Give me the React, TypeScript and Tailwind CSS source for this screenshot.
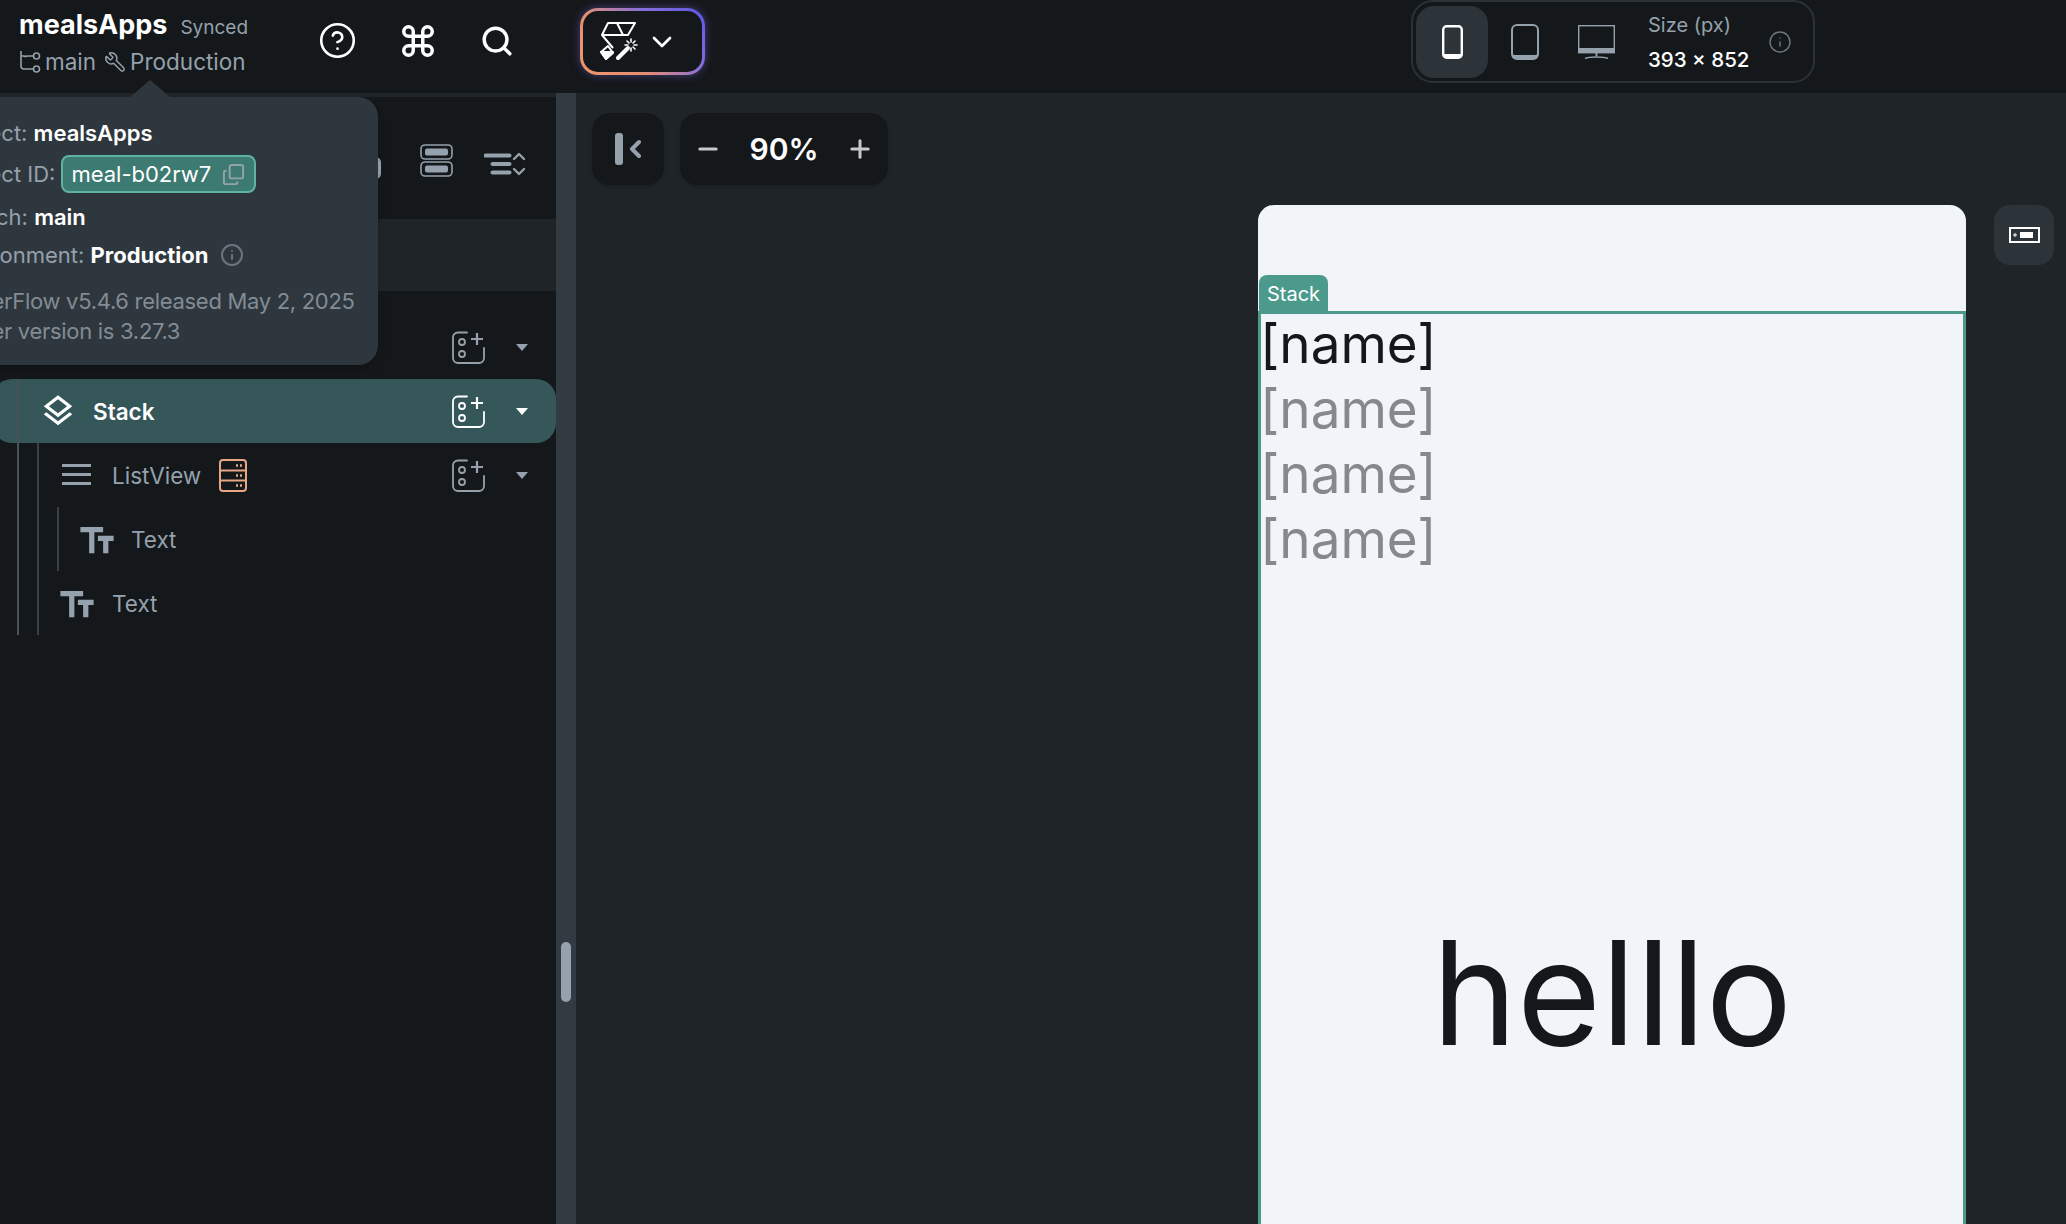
import { ChevronDown, CircleHelp, Command, Copy, Info, Minus, Plus, Search, Wrench } from 'lucide-react'
import { MdOutlineLayers, MdTextFields } from 'react-icons/md'

function BranchIcon() {
  return (
    <svg width="22" height="24" viewBox="0 0 22 24" fill="none" stroke="currentColor" strokeWidth="1.6">
      <path d="M2 1v15a3 3 0 0 0 3 3h9M2 6h3a3 3 0 0 0 3 0h6" />
      <circle cx="17.5" cy="6" r="3" />
      <circle cx="17.5" cy="19" r="3" />
    </svg>
  )
}

function MagicIcon() {
  return (
    <svg width="40" height="40" viewBox="0 0 40 40" fill="none" stroke="white" strokeWidth="2" strokeLinejoin="round">
      <path d="M2 13 8 1h27l-7 12ZM17 1l6 12M2 13l11 13" />
      <path d="M8 24 1 30l5 7 7-6Z" />
      <path d="M1 30h12l-7 7Z" fill="white" />
      <path d="m18 36 10-10" strokeWidth="4" strokeLinecap="round" />
      <path d="M31 17v3M31 26v3M25 23h3M34 23h3M27 19l2 2M33 25l2 2M35 19l-2 2" strokeWidth="1.6" strokeLinecap="round" />
    </svg>
  )
}

function AddWidgetIcon({ className }: { className: string }) {
  return (
    <svg className={className} width="33" height="33" viewBox="0 0 33 33" fill="none" stroke="currentColor" strokeWidth="1.8">
      <path d="M15 1.5H6a5 5 0 0 0-5 5V27a5 5 0 0 0 5 5h21a5 5 0 0 0 5-5V17" strokeLinecap="round" />
      <circle cx="10" cy="11" r="3" />
      <circle cx="10" cy="23" r="3" />
      <path d="M25 2v12M19 8h12" strokeWidth="2.2" />
    </svg>
  )
}

function StorageIcon() {
  return (
    <svg width="28" height="33" viewBox="0 0 28 33" fill="none" stroke="#e8a684" strokeWidth="2">
      <rect x="1" y="1" width="26" height="31" rx="3" />
      <path d="M1 11.5h26M1 21.5h26" />
      <path d="M17 6.5h2M21 6.5h2M17 16.5h2M21 16.5h2M17 26.5h2M21 26.5h2" strokeWidth="2.4" />
    </svg>
  )
}

function Caret({ className }: { className: string }) {
  return <div className={`w-0 h-0 border-x-[6px] border-x-transparent border-t-[7px] ${className}`} />
}

function TreeRow({
  icon,
  label,
  left,
  textLeft,
  actions,
  active,
  children,
}: {
  icon: React.ReactNode
  label: string
  left: string
  textLeft: string
  actions?: boolean
  active?: boolean
  children?: React.ReactNode
}) {
  return (
    <div className={`h-16 flex items-center pr-[28px] ${left} ${active ? '-ml-[8px] rounded-[20px] bg-[#35575a]' : ''}`}>
      <div className="shrink-0 flex items-center justify-center">{icon}</div>
      <span className={`${textLeft} mt-[2px] text-[22.5px] ${active ? 'font-semibold text-white' : 'text-[#95a1ac]'}`}>{label}</span>
      {children}
      {actions && (
        <div className="ml-auto flex items-center gap-[31px]">
          <AddWidgetIcon className={active ? 'text-white' : 'text-[#95a1ac]'} />
          <Caret className={active ? 'border-t-white' : 'border-t-[#95a1ac]'} />
        </div>
      )}
    </div>
  )
}

function Popover() {
  return (
    <>
      <div className="absolute left-[130px] top-[80px] w-0 h-0 border-x-[20px] border-x-transparent border-b-[17px] border-b-[#2f373e]" />
      <div className="absolute left-[-76px] top-[97px] w-[454px] h-[268px] rounded-[20px] bg-[#2f373e] pl-[24px] pt-[20px] text-[22px] leading-[32px] text-[#95a1ac] shadow-lg">
        <div>
          Project: <span className="font-semibold text-white">mealsApps</span>
        </div>
        <div className="flex items-center gap-[6px] mt-[6px]">
          Project ID:
          <span className="h-[38px] w-[195px] flex items-center justify-between pl-[8px] pr-[9px] rounded-[8px] bg-[#3d7a72] border-2 border-[#5fb3a3] text-white">
            meal-b02rw7
            <Copy size={23} className="text-[#95a1ac] -scale-y-100" />
          </span>
        </div>
        <div className="mt-[8px]">
          Branch: <span className="font-semibold text-white">main</span>
        </div>
        <div className="flex items-center gap-[12px] mt-[6px]">
          <span>
            Environment: <span className="font-bold text-white">Production</span>
          </span>
          <Info size={24} className="text-[#6b757d]" />
        </div>
        <div className="mt-[15px] text-[#828c94] leading-[30px] tracking-[-0.3px]">
          <div>FlutterFlow v5.4.6 released May 2, 2025</div>
          <div>Flutter version is 3.27.3</div>
        </div>
      </div>
    </>
  )
}

function Header() {
  return (
    <header className="h-[93px] shrink-0 bg-[#14181b] flex items-start">
      <div className="w-[270px] shrink-0 pl-[19px] pt-[7px]">
        <div className="flex items-baseline gap-[13px]">
          <span className="text-[27px] leading-[36px] font-bold text-white">mealsApps</span>
          <span className="text-[19px] leading-[26px] text-[#95a1ac]">Synced</span>
        </div>
        <div className="flex items-center text-[22.5px] leading-[32px] text-[#95a1ac] mt-[3px]">
          <BranchIcon />
          <span className="ml-[4px]">main</span>
          <Wrench size={22} strokeWidth={1.6} className="ml-[8px] -scale-x-100" />
          <span className="ml-[4px]">Production</span>
        </div>
      </div>
      <div className="flex items-center text-white mt-[21px] ml-[48px] gap-[42px]">
        <CircleHelp size={39} strokeWidth={1.6} />
        <Command size={38} strokeWidth={2.2} />
        <Search size={36} strokeWidth={2.4} className="scale-95" />
      </div>
      <div className="ml-[65px] mt-[8px] w-[125px] h-[67px] rounded-[18px] p-[3px] bg-[linear-gradient(45deg,#f0966a_0%,#e58f72_35%,#8a6fd8_65%,#5b57e6_100%)] shadow-[0_0_8px_rgba(120,100,220,0.5)]">
        <div className="h-full rounded-[15px] bg-[#14181b] flex items-center pl-[17px] gap-[6px]">
          <MagicIcon />
          <ChevronDown size={32} strokeWidth={2} className="text-white" />
        </div>
      </div>
      <div className="ml-auto mr-[251px] w-[404px] h-[83px] rounded-[22px] border-2 border-[#2b3238] flex items-center pl-[3px]">
        <div className="w-[72px] h-[72px] rounded-[18px] bg-[#2c343a] flex items-center justify-center">
          <svg width="21" height="34" viewBox="0 0 21 34" fill="none">
            <rect x="1.2" y="1.2" width="18.6" height="31.6" rx="3.5" stroke="white" strokeWidth="2.4" />
            <path d="M1 29h19v1a3 3 0 0 1-3 3H4a3 3 0 0 1-3-3Z" fill="white" />
          </svg>
        </div>
        <svg className="ml-[23px]" width="28" height="36" viewBox="0 0 28 36" fill="none">
          <rect x="1" y="1" width="26" height="34" rx="5" stroke="#95a1ac" strokeWidth="2" />
          <path d="M1 29a3 3 0 0 0 3 2h20a3 3 0 0 0 3-2v2a4 4 0 0 1-4 4H5a4 4 0 0 1-4-4Z" fill="#95a1ac" />
        </svg>
        <svg className="ml-[39px]" width="37" height="34" viewBox="0 0 37 34" fill="none">
          <rect x="0.7" y="0.7" width="35.6" height="27" stroke="#95a1ac" strokeWidth="1.4" />
          <rect x="0" y="23" width="37" height="5" fill="#95a1ac" />
          <path d="M18.5 28v3" stroke="#95a1ac" strokeWidth="2" />
          <path d="M7 33.5c4-2 19-2 23 0" stroke="#95a1ac" strokeWidth="1.4" />
        </svg>
        <div className="ml-[33px] mt-[3px] flex flex-col w-[104px]">
          <span className="text-[20px] leading-[28px] text-[#95a1ac]">Size (px)</span>
          <span className="text-[20.5px] leading-[30px] mt-[6px] font-medium text-white whitespace-nowrap">393 × 852</span>
        </div>
        <Info size={24} strokeWidth={1.5} className="ml-[16px] text-[#6b757d]" />
      </div>
    </header>
  )
}

function Sidebar() {
  return (
    <aside className="w-[556px] shrink-0 bg-[#14181b] border-t-4 border-[#1e2428] flex flex-col">
      <div className="h-[122px] flex items-start justify-end pr-[30px] pt-[47px]">
        <svg className="mt-[13px] mr-[39px]" width="33" height="22" viewBox="0 0 33 22" fill="none">
          <rect x="1.5" y="1.5" width="30" height="19" rx="4" stroke="#95a1ac" strokeWidth="3" />
        </svg>
        <svg className="mr-[31px]" width="33" height="33" viewBox="0 0 33 33" fill="none">
          <rect x="1" y="1" width="31" height="14" rx="4" stroke="#95a1ac" strokeWidth="1.6" />
          <rect x="5" y="4.5" width="23" height="7" rx="2" fill="#95a1ac" />
          <rect x="1" y="18" width="31" height="14" rx="4" stroke="#95a1ac" strokeWidth="1.6" />
          <rect x="5" y="21.5" width="23" height="7" rx="2" fill="#95a1ac" />
        </svg>
        <svg className="mt-[8px]" width="42" height="24" viewBox="0 0 42 24" fill="none" stroke="#95a1ac">
          <path d="M1.5 3.5h24M8.5 12h17M8.5 20.5h17" strokeWidth="4" strokeLinecap="round" />
          <path d="m30 7 5-5 5 5M30 17l5 5 5-5" strokeWidth="2.4" strokeLinecap="round" strokeLinejoin="round" />
        </svg>
      </div>
      <div className="h-[72px] bg-[#1e2428]" />
      <div className="relative mt-[24px] flex-1">
        <div className="absolute left-[17px] top-[64px] h-[256px] w-[2px] bg-[#4a5258]" />
        <div className="absolute left-[37px] top-[128px] h-[192px] w-[2px] bg-[#3a4248]" />
        <div className="absolute left-[57px] top-[192px] h-[64px] w-[2px] bg-[#3a4248]" />
        <TreeRow icon={null} label="" left="" textLeft="" actions />
        <TreeRow icon={<MdOutlineLayers size={38} color="white" />} label="Stack" left="pl-[47px]" textLeft="ml-[16px]" active actions />
        <TreeRow
          icon={
            <svg width="30" height="24" viewBox="0 0 30 24" fill="#95a1ac">
              <rect y="1" width="29" height="3" />
              <rect y="10" width="29" height="3" />
              <rect y="19" width="29" height="3" />
            </svg>
          }
          label="ListView"
          left="pl-[62px]"
          textLeft="ml-[20px]"
          actions
        >
          <div className="ml-[18px] flex">
            <StorageIcon />
          </div>
        </TreeRow>
        <TreeRow icon={<MdTextFields size={42} color="#95a1ac" className="mt-[3px]" />} label="Text" left="pl-[76px]" textLeft="ml-[13px]" />
        <TreeRow icon={<MdTextFields size={42} color="#95a1ac" className="mt-[3px]" />} label="Text" left="pl-[56px]" textLeft="ml-[14px]" />
      </div>
    </aside>
  )
}

function Phone() {
  return (
    <div className="w-[708px] shrink-0 mt-[112px] rounded-t-[16px] bg-[#f1f4f8] pt-[106px] self-stretch">
      <div className="relative h-[1000px] border-[3px] border-[#4b9a8c] text-[#14181b]">
        <div className="absolute left-[-2px] top-[-39px] w-[69px] h-[37px] rounded-t-[8px] bg-[#4b9a8c] flex items-center justify-center text-[20px] text-white">
          Stack
        </div>
        <div className="-mt-[2px] -ml-px">
          {['text-[#14181b]', 'text-[#85888c]', 'text-[#85888c]', 'text-[#85888c]'].map((color, i) => (
            <div key={i} className={`h-[65px] text-[53px] leading-[65px] ${color}`}>
              [name]
            </div>
          ))}
        </div>
        <div className="mt-[334px] text-center text-[144px] leading-[174px]">helllo</div>
      </div>
    </div>
  )
}

export default function App() {
  return (
    <div className="relative h-screen w-full overflow-hidden flex flex-col bg-[#1e2428] font-['Inter',sans-serif]">
      <Header />
      <div className="flex flex-1 min-h-0">
        <Sidebar />
        <div className="relative w-[20px] shrink-0 bg-[#323b42]">
          <div className="absolute left-[5px] top-[849px] w-[10px] h-[60px] rounded-full bg-[#95a1ac]" />
        </div>
        <main className="flex-1 min-w-0 flex items-start justify-between pl-[16px] pr-[12px]">
          <div className="flex gap-[16px] mt-[20px]">
            <div className="w-[72px] h-[72px] rounded-[18px] bg-[#14181b] flex items-center justify-center gap-[6px] shadow-md">
              <div className="w-[8px] h-[32px] rounded-[3px] bg-[#95a1ac]" />
              <svg width="12" height="20" viewBox="0 0 12 20" fill="none" stroke="#95a1ac" strokeWidth="4" strokeLinecap="round" strokeLinejoin="round">
                <path d="M10 3 3 10l7 7" />
              </svg>
            </div>
            <div className="w-[208px] h-[72px] rounded-[18px] bg-[#14181b] flex items-center justify-between px-[14px] shadow-md">
              <Minus size={28} strokeWidth={2.6} className="text-[#c5c9cc]" />
              <span className="text-[30px] font-semibold text-white">90%</span>
              <Plus size={28} strokeWidth={2.6} className="text-[#c5c9cc]" />
            </div>
          </div>
          <div className="flex-1" />
          <Phone />
          <div className="ml-[28px] mt-[112px] w-[60px] h-[60px] rounded-[16px] bg-[#2c343a] flex items-center justify-center">
            <svg width="31" height="16" viewBox="0 0 31 16" fill="none">
              <rect x="1" y="1" width="29" height="14" stroke="white" strokeWidth="2" />
              <rect x="11" y="5" width="13" height="6" fill="white" />
              <path d="M4 8h4M6 6v4" stroke="white" strokeWidth="1" />
            </svg>
          </div>
        </main>
      </div>
      <Popover />
    </div>
  )
}
